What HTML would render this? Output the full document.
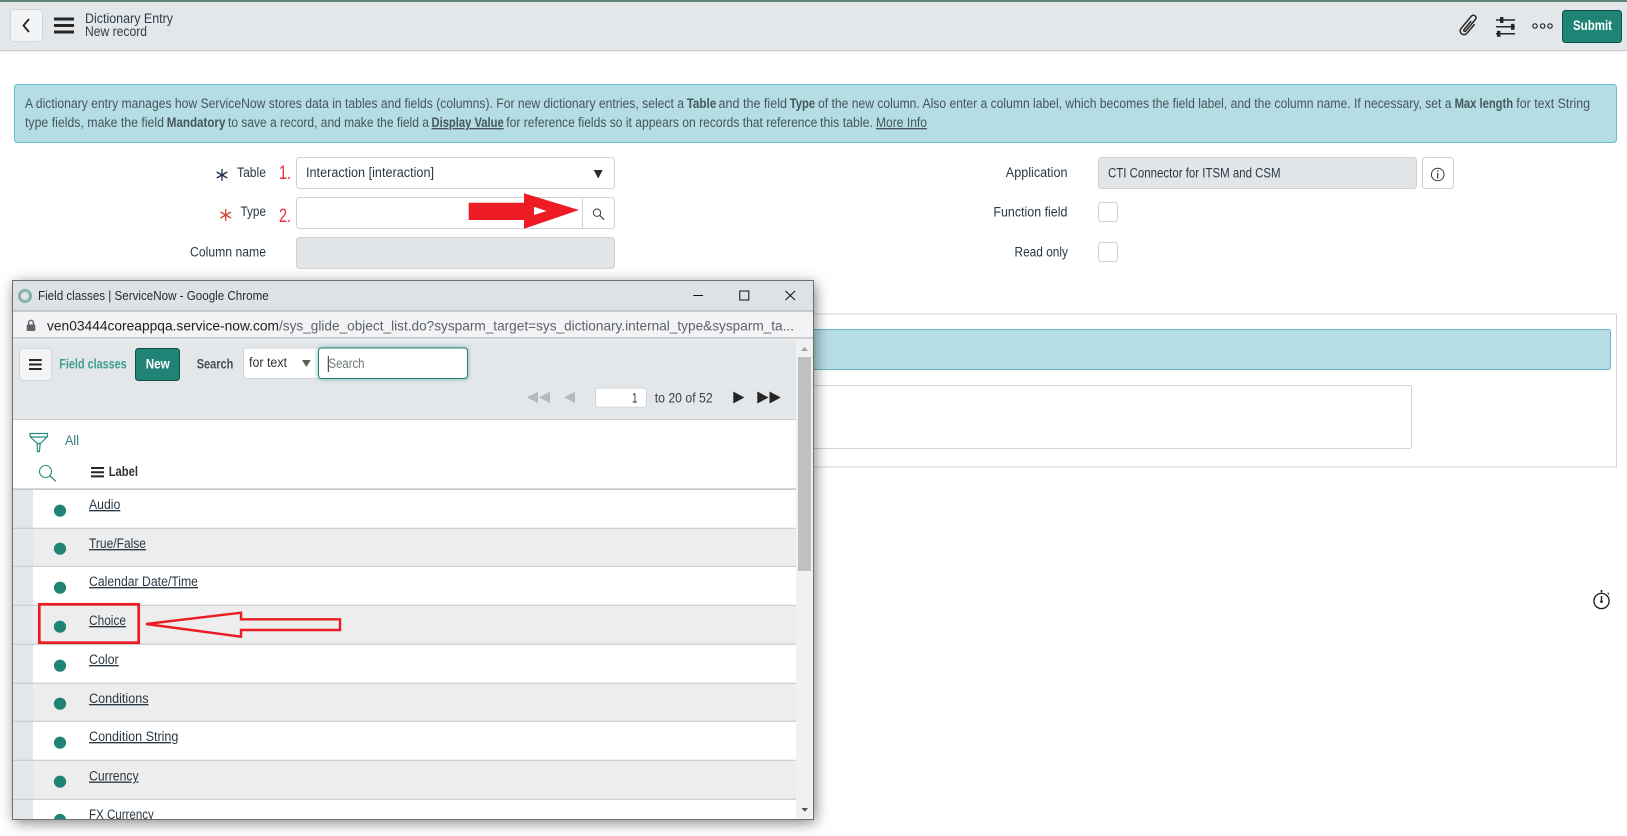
<!DOCTYPE html>
<html lang="en">
<head>
<meta charset="utf-8">
<title>Dictionary Entry</title>
<style>
html,body{margin:0;padding:0;background:#fff;width:1627px;height:836px;overflow:hidden}
svg{display:block}
text{font-family:"Liberation Sans",sans-serif;font-size:13.5px;fill:#2e3d49;white-space:pre}
.b{font-size:13.5px;fill:#46565c}
.bb{font-size:13.5px;font-weight:bold;fill:#46565c}
.u{text-decoration:underline}
.lbl{font-size:13.5px;fill:#2a3844}
.row{font-size:13.5px;fill:#2a3844;text-decoration:underline}
</style>
</head>
<body>
<svg width="1627" height="836" viewBox="0 0 1627 836" xmlns="http://www.w3.org/2000/svg">
<defs>
<filter id="sh" x="-5%" y="-6%" width="110%" height="112%"><feDropShadow dx="2" dy="3" stdDeviation="7" flood-color="#000" flood-opacity=".5"/></filter>
<filter id="gl" x="-10%" y="-30%" width="120%" height="160%"><feDropShadow dx="0" dy="0" stdDeviation="2.2" flood-color="#1f8476" flood-opacity=".6"/></filter>
<clipPath id="pop"><rect x="13" y="419" width="783" height="400"/></clipPath>
</defs>

<!-- header -->
<rect x="0" y="0" width="1627" height="51" fill="#e3e7ea"/>
<rect x="0" y="0" width="1627" height="2" fill="#5d8576"/>
<rect x="0" y="50" width="1627" height="1.3" fill="#cacccd"/>
<rect x="10.5" y="9.5" width="32" height="32" rx="3" fill="#f3f4f5" stroke="#d3d6d8"/>
<path d="M29 19 L23.5 25.5 L29 32" fill="none" stroke="#222" stroke-width="1.8"/>
<path d="M54 19h20M54 25.5h20M54 32h20" stroke="#262626" stroke-width="3"/>
<text x="85" y="23" textLength="88" lengthAdjust="spacingAndGlyphs">Dictionary Entry</text>
<text x="85" y="36" textLength="62" lengthAdjust="spacingAndGlyphs">New record</text>

<g transform="translate(1468.5 25.5) rotate(40)" fill="none" stroke="#262626" stroke-width="1.5"><path d="M3.8 -5 V7 a3.8 3.8 0 0 1 -7.6 0 V-9 a2.6 2.6 0 0 1 5.2 0 V6 a1.1 1.1 0 0 1 -2.2 0 V-5"/></g>
<path d="M1496 20h19M1496 26.8h19M1496 33.8h19" stroke="#262626" stroke-width="1.5"/>
<rect x="1500" y="17" width="3.4" height="6" fill="#262626"/><rect x="1511" y="23.8" width="3.4" height="6" fill="#262626"/><rect x="1497" y="30.8" width="3.4" height="6" fill="#262626"/>
<g fill="none" stroke="#262626" stroke-width="1.2"><circle cx="1535" cy="26" r="2.2"/><circle cx="1542.7" cy="26" r="2.2"/><circle cx="1550" cy="26" r="2.2"/></g>
<rect x="1562.5" y="10.5" width="59" height="32" rx="3" fill="#1f8476" stroke="#0f4f46"/>
<text x="1573" y="30" textLength="39" lengthAdjust="spacingAndGlyphs" style="font-weight:bold;fill:#fff">Submit</text>

<!-- banner -->
<rect x="14.5" y="84.5" width="1602" height="58" rx="3" fill="#b4dde4" stroke="#63bdd1"/>
<text class="b" x="25" y="108" textLength="659" lengthAdjust="spacingAndGlyphs">A dictionary entry manages how ServiceNow stores data in tables and fields (columns). For new dictionary entries, select a</text>
<text class="bb" x="686.7" y="108" textLength="29.5" lengthAdjust="spacingAndGlyphs">Table</text>
<text class="b" x="718.5" y="108" textLength="68.5" lengthAdjust="spacingAndGlyphs">and the field</text>
<text class="bb" x="789.7" y="108" textLength="25.5" lengthAdjust="spacingAndGlyphs">Type</text>
<text class="b" x="818" y="108" textLength="633.5" lengthAdjust="spacingAndGlyphs">of the new column. Also enter a column label, which becomes the field label, and the column name. If necessary, set a</text>
<text class="bb" x="1454.6" y="108" textLength="58.5" lengthAdjust="spacingAndGlyphs">Max length</text>
<text class="b" x="1516.3" y="108" textLength="73.7" lengthAdjust="spacingAndGlyphs">for text String</text>
<text class="b" x="25" y="127" textLength="139" lengthAdjust="spacingAndGlyphs">type fields, make the field</text>
<text class="bb" x="166.8" y="127" textLength="58.6" lengthAdjust="spacingAndGlyphs">Mandatory</text>
<text class="b" x="228" y="127" textLength="200.9" lengthAdjust="spacingAndGlyphs">to save a record, and make the field a</text>
<text class="bb u" x="431.5" y="127" textLength="72.2" lengthAdjust="spacingAndGlyphs">Display Value</text>
<text class="b" x="506.3" y="127" textLength="311" lengthAdjust="spacingAndGlyphs">for reference fields so it appears on records that reference</text>
<text class="b" x="820" y="127" textLength="53" lengthAdjust="spacingAndGlyphs">this table.</text>
<text class="b u" x="876" y="127" textLength="51" lengthAdjust="spacingAndGlyphs">More Info</text>

<!-- form left -->
<path d="M222 169v12M216.8 172l10.4 6M227.2 172l-10.4 6" stroke="#1f2d4a" stroke-width="1.3"/>
<text class="lbl" x="237" y="177" textLength="29" lengthAdjust="spacingAndGlyphs">Table</text>
<text x="279" y="179" textLength="12" lengthAdjust="spacingAndGlyphs" style="font-size:19.5px;fill:#ed2a35">1.</text>
<rect x="296.5" y="157.5" width="318" height="31" rx="3" fill="#fff" stroke="#cfd2d4"/>
<text class="lbl" x="306" y="177" textLength="128" lengthAdjust="spacingAndGlyphs">Interaction [interaction]</text>
<path d="M593.7 170h9l-4.5 8.5z" fill="#2d2d2d"/>

<path d="M225.7 209v12M220.5 212l10.4 6M230.9 212l-10.4 6" stroke="#cf4a2e" stroke-width="1.3"/>
<text class="lbl" x="240.5" y="216" textLength="25.5" lengthAdjust="spacingAndGlyphs">Type</text>
<text x="279" y="222" textLength="12" lengthAdjust="spacingAndGlyphs" style="font-size:19.5px;fill:#ed2a35">2.</text>
<rect x="296.5" y="197.5" width="318" height="31" rx="3" fill="#fff" stroke="#cfd2d4"/>
<path d="M582.5 198v30" stroke="#cfd2d4"/>
<circle cx="597" cy="212.7" r="3.7" fill="none" stroke="#2d3a45" stroke-width="1"/><path d="M599.8 215.5L604 219.7" stroke="#2d3a45" stroke-width="1.1"/>
<path d="M468.7 202.7H524V193.3L579 210L524 228.7V220H468.7Z" fill="#ed1c24"/>
<path d="M534 206.7L546.7 211L534 215Z" fill="#fff"/>

<text class="lbl" x="190" y="256.5" textLength="76" lengthAdjust="spacingAndGlyphs">Column name</text>
<rect x="296.5" y="237.5" width="318" height="31" rx="3" fill="#e3e6e9" stroke="#cfd2d4"/>

<!-- form right -->
<text class="lbl" x="1005.8" y="177" textLength="61.7" lengthAdjust="spacingAndGlyphs">Application</text>
<rect x="1098.5" y="157.5" width="318" height="31" rx="3" fill="#e3e6e9" stroke="#cfd2d4"/>
<text class="lbl" x="1108" y="177.5" textLength="172.6" lengthAdjust="spacingAndGlyphs">CTI Connector for ITSM and CSM</text>
<rect x="1422.5" y="157.5" width="31" height="31" rx="3" fill="#fff" stroke="#cfd2d4"/>
<circle cx="1437.7" cy="174.5" r="6.3" fill="none" stroke="#2d3a45" stroke-width="1"/><path d="M1437.7 173v5.5M1437.7 170.5v1.4" stroke="#2d3a45" stroke-width="1.2"/>
<text class="lbl" x="993.4" y="216.5" textLength="74" lengthAdjust="spacingAndGlyphs">Function field</text>
<rect x="1098.5" y="202.5" width="19" height="19" rx="3" fill="#fff" stroke="#cfd2d4"/>
<text class="lbl" x="1014.5" y="256.5" textLength="53.5" lengthAdjust="spacingAndGlyphs">Read only</text>
<rect x="1098.5" y="242.5" width="19" height="19" rx="3" fill="#fff" stroke="#cfd2d4"/>

<!-- section behind popup -->
<rect x="300.5" y="314" width="1316" height="153" fill="#fff" stroke="#d2d3d4"/>
<rect x="700.5" y="329.5" width="910" height="40" rx="2" fill="#b6dde4" stroke="#6bb6c4"/>
<rect x="700.5" y="385.5" width="711" height="63" rx="2" fill="#fff" stroke="#d2d3d4"/>

<!-- stopwatch -->
<circle cx="1601.5" cy="601" r="7.6" fill="none" stroke="#1a1a1a" stroke-width="1.3"/>
<path d="M1601.5 590v2.4" stroke="#1a1a1a" stroke-width="1.6"/>
<path d="M1601.5 596v7" stroke="#1a1a1a" stroke-width="1.4"/><circle cx="1601.5" cy="601.5" r="1.3" fill="#1a1a1a"/>
<path d="M1608 592.5l.6 2.2" stroke="#1c4f7a" stroke-width="1.2"/>

<!-- popup window -->
<rect x="12.5" y="280.5" width="801" height="539" fill="#fff" filter="url(#sh)"/>
<rect x="13" y="281" width="800" height="30" fill="#dee1e6"/>
<rect x="13" y="311" width="800" height="27" fill="#f2f3f5"/>
<path d="M13 311h800M13 338h800" stroke="#a4a6a8"/>
<circle cx="25" cy="296" r="5.6" fill="none" stroke="#81b6a3" stroke-width="3"/>
<text x="38" y="300" textLength="230.7" lengthAdjust="spacingAndGlyphs" style="font-size:12.5px;fill:#2b2b2b">Field classes | ServiceNow - Google Chrome</text>
<path d="M693.3 295.5H703" stroke="#111" stroke-width="1"/>
<rect x="739.8" y="291" width="9" height="9" fill="none" stroke="#111"/>
<path d="M785.5 291L795 300M795 291L785.5 300" stroke="#111"/>
<rect x="26.7" y="324.5" width="8.6" height="6.5" rx="1" fill="#5f6368"/><path d="M28.6 324.5v-1.8a2.4 2.4 0 0 1 4.8 0v1.8" fill="none" stroke="#5f6368" stroke-width="1.4"/>
<text x="47" y="330.5" textLength="232" lengthAdjust="spacingAndGlyphs" style="font-size:14px;fill:#202124">ven03444coreappqa.service-now.com</text>
<text x="279" y="330.5" textLength="515" lengthAdjust="spacingAndGlyphs" style="font-size:14px;fill:#5f6368">/sys_glide_object_list.do?sysparm_target=sys_dictionary.internal_type&amp;sysparm_ta...</text>

<rect x="13" y="339" width="783" height="80" fill="#e3e7ea"/>
<rect x="13" y="339" width="783" height="1.5" fill="#eff1f2"/>
<path d="M13 419.5H796" stroke="#cdd0d2"/>
<rect x="19.5" y="348.5" width="32" height="32" rx="3" fill="#f3f4f5" stroke="#d3d6d8"/>
<path d="M29 360h12.7M29 364.5h12.7M29 369h12.7" stroke="#262626" stroke-width="2"/>
<text x="59.3" y="368.5" textLength="67.4" lengthAdjust="spacingAndGlyphs" style="font-weight:bold;fill:#3f9d8c">Field classes</text>
<rect x="135.5" y="348.5" width="44" height="32" rx="3" fill="#1f8476" stroke="#0f4f46"/>
<text x="145.7" y="368.5" textLength="24" lengthAdjust="spacingAndGlyphs" style="font-weight:bold;fill:#fff">New</text>
<text x="196.7" y="368.5" textLength="36.6" lengthAdjust="spacingAndGlyphs" style="font-weight:bold;fill:#4a4f53">Search</text>
<rect x="243.5" y="348" width="80" height="30.5" rx="3" fill="#fff" stroke="#d3d6d8"/>
<text x="249" y="367" textLength="38" lengthAdjust="spacingAndGlyphs" style="fill:#333">for text</text>
<path d="M302 360h8.7l-4.3 7z" fill="#5c5c5c"/>
<rect x="318.5" y="348" width="149" height="30.5" rx="3" fill="#fff" stroke="#1f8476" filter="url(#gl)"/>
<path d="M328.3 356v16" stroke="#222"/>
<text x="328.5" y="368" textLength="36" lengthAdjust="spacingAndGlyphs" style="fill:#6f777b">Search</text>

<path d="M538 391.7v11.3l-11.3-5.6zM550 391.7v11.3l-11.3-5.6zM575 391.7v11.3l-11-5.6z" fill="#b6babc"/>
<rect x="595.5" y="388" width="51" height="19.3" rx="3" fill="#fff" stroke="#d3d6d8"/>
<text x="632" y="402.5" textLength="5.5" lengthAdjust="spacingAndGlyphs" style="fill:#333">1</text>
<text x="654.7" y="402.5" textLength="58" lengthAdjust="spacingAndGlyphs" style="fill:#3a4248">to 20 of 52</text>
<path d="M733.3 391.5v12l11-6zM757.3 391.5v12l11.2-6zM769.5 391.5v12l11.3-6z" fill="#262626"/>

<!-- scrollbar -->
<rect x="796" y="339" width="17.5" height="480" fill="#f1f1f1"/>
<rect x="798" y="357" width="13" height="214" fill="#c0c0c0"/>
<path d="M801 351h7l-3.5-4z" fill="#a3a3a3"/>
<path d="M801.5 808h6.5l-3.2 3.8z" fill="#505050"/>

<!-- list -->
<path d="M30 433.5H47.5V436.5L40.3 443.5H37.2L30 436.5Z M30 437H47.5" fill="none" stroke="#2a8a80" stroke-width="1.2"/>
<path d="M37.2 443.5h3l-.8 8h-2z" fill="none" stroke="#2a8a80" stroke-width="1.2"/>
<text x="65" y="445" textLength="14" lengthAdjust="spacingAndGlyphs" style="fill:#2f7f78">All</text>
<circle cx="45.5" cy="471.5" r="6" fill="none" stroke="#2a8a80" stroke-width="1.1"/><path d="M50 476L56 481.3" stroke="#2a8a80" stroke-width="1.3"/>
<path d="M91 468h13M91 472.2h13M91 476.4h13" stroke="#262626" stroke-width="2"/>
<text x="108.7" y="476" textLength="29.3" lengthAdjust="spacingAndGlyphs" style="font-weight:bold;fill:#333">Label</text>
<rect x="13" y="488.3" width="783" height="2" fill="#c8c8c8"/>

<g clip-path="url(#pop)">
<rect x="33" y="490" width="763" height="329" fill="#fff"/>
<rect x="13" y="490" width="20" height="329" fill="#e3e7ea"/>
<g fill="#ededed">
<rect x="13" y="529" width="783" height="37"/>
<rect x="13" y="606" width="783" height="38"/>
<rect x="13" y="684" width="783" height="37"/>
<rect x="13" y="761" width="783" height="38"/>
</g>
<g fill="#e3e7ea">
<rect x="13" y="529" width="20" height="37"/>
<rect x="13" y="606" width="20" height="38"/>
<rect x="13" y="684" width="20" height="37"/>
<rect x="13" y="761" width="20" height="38"/>
</g>
<g stroke="#c8cacb" stroke-width="1.2">
<path d="M13 528.3H796M13 566.3H796M13 605.3H796M13 644.3H796M13 683.3H796M13 721.3H796M13 760.3H796M13 799.3H796"/>
</g>
<g fill="#1f8476">
<circle cx="60" cy="510.7" r="6.1"/><circle cx="60" cy="548.7" r="6.1"/><circle cx="60" cy="587.7" r="6.1"/><circle cx="60" cy="626.7" r="6.1"/><circle cx="60" cy="665.7" r="6.1"/><circle cx="60" cy="703.7" r="6.1"/><circle cx="60" cy="742.7" r="6.1"/><circle cx="60" cy="781.7" r="6.1"/><circle cx="60" cy="820" r="6.1"/>
</g>
<text class="row" x="89" y="509" textLength="31.3" lengthAdjust="spacingAndGlyphs">Audio</text>
<text class="row" x="89" y="548" textLength="57" lengthAdjust="spacingAndGlyphs">True/False</text>
<text class="row" x="89" y="586" textLength="109" lengthAdjust="spacingAndGlyphs">Calendar Date/Time</text>
<text class="row" x="89" y="625" textLength="37" lengthAdjust="spacingAndGlyphs">Choice</text>
<text class="row" x="89" y="664" textLength="29.7" lengthAdjust="spacingAndGlyphs">Color</text>
<text class="row" x="89" y="703" textLength="59.5" lengthAdjust="spacingAndGlyphs">Conditions</text>
<text class="row" x="89" y="741" textLength="89.4" lengthAdjust="spacingAndGlyphs">Condition String</text>
<text class="row" x="89" y="780.5" textLength="49.6" lengthAdjust="spacingAndGlyphs">Currency</text>
<text class="row" x="89" y="819" textLength="64.8" lengthAdjust="spacingAndGlyphs">FX Currency</text>
</g>

<!-- annotations -->
<rect x="39.3" y="604.3" width="99.4" height="38.4" fill="none" stroke="#ed1c24" stroke-width="2.7"/>
<path d="M146 624L241 612.7V619.3H340V630H241V636.7Z" fill="none" stroke="#ed1c24" stroke-width="2.4"/>
<rect x="12.5" y="280.5" width="801" height="539" fill="none" stroke="#6d6f71"/>
</svg>
</body>
</html>
